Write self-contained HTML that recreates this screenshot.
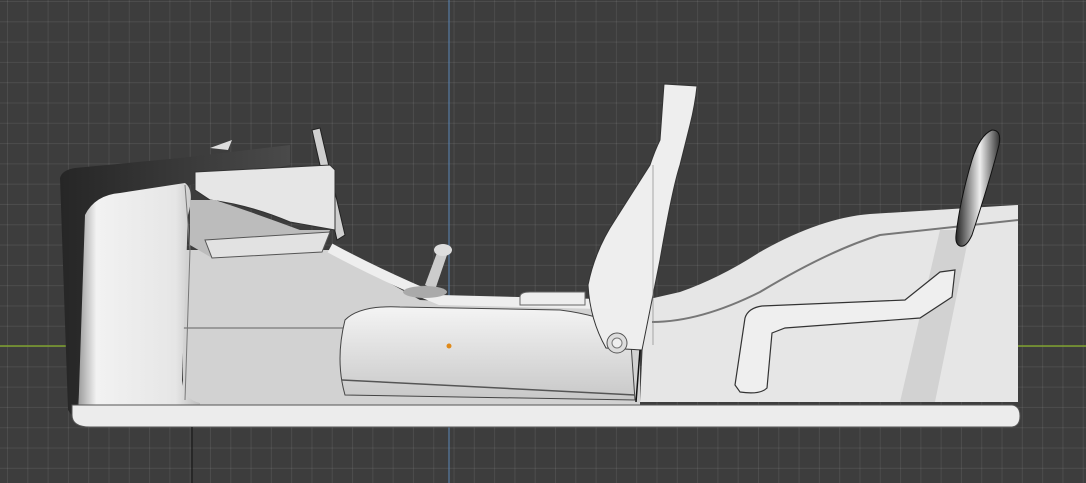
<!DOCTYPE html>
<html><head><style>
html,body{margin:0;padding:0;}
body{width:1086px;height:483px;overflow:hidden;background:#3d3d3d;position:relative;
background-image:
linear-gradient(to right, rgba(255,255,255,0.08) 1px, transparent 1px),
linear-gradient(to bottom, rgba(255,255,255,0.08) 1px, transparent 1px);
background-size:20.3px 20.3px;background-position:7px 1px;}
svg{position:absolute;left:0;top:0;}
</style></head><body>
<svg width="1086" height="483" viewBox="0 0 1086 483">
<defs>
<linearGradient id="pil" x1="0" x2="1"><stop offset="0" stop-color="#9a9a9a"/><stop offset="0.15" stop-color="#f2f2f2"/><stop offset="0.8" stop-color="#e6e6e6"/><stop offset="1" stop-color="#bdbdbd"/></linearGradient>
<linearGradient id="dark" x1="0" x2="1"><stop offset="0" stop-color="#262626"/><stop offset="1" stop-color="#4a4a4a"/></linearGradient>
<linearGradient id="seat" x1="0" y1="0" x2="0" y2="1"><stop offset="0" stop-color="#f4f4f4"/><stop offset="1" stop-color="#c8c8c8"/></linearGradient>
<linearGradient id="hr" x1="0" x2="1"><stop offset="0" stop-color="#222"/><stop offset="0.55" stop-color="#eee"/><stop offset="1" stop-color="#333"/></linearGradient>
</defs>
<line x1="449" y1="0" x2="449" y2="483" stroke="#5a87b8" stroke-width="1"/>
<line x1="0" y1="346" x2="70" y2="346" stroke="#7fa12e" stroke-width="1.5"/>
<line x1="1018" y1="346" x2="1086" y2="346" stroke="#7fa12e" stroke-width="1.5"/>
<path d="M312,130 L320,128 L345,235 L337,240 Z" fill="#cfcfcf" stroke="#222" stroke-width="1"/>
<path d="M183,250 L330,250 L420,300 L640,310 L640,405 L183,405 Z" fill="#d2d2d2"/>
<path d="M183,328 L640,328" stroke="#888" stroke-width="1.5"/>
<path d="M330,248 Q380,275 440,300 L640,305" stroke="#eee" stroke-width="10" fill="none"/>
<path d="M60,178 Q62,170 75,168 L180,158 L290,145 L290,165 L190,185 L110,200 L75,420 L68,410 Z" fill="url(#dark)"/>
<path d="M85,215 Q95,195 120,193 L185,183 Q195,190 188,215 L182,380 Q184,400 200,403 L200,410 L78,420 Z" fill="url(#pil)"/>
<path d="M185,185 L190,250 L185,400" stroke="#777" stroke-width="1" fill="none"/>
<path d="M195,172 L330,165 L335,170 L335,230 L290,222 Q250,205 210,200 L195,190 Z" fill="#e6e6e6" stroke="#333" stroke-width="1"/>
<path d="M190,200 L215,200 Q260,215 300,230 L330,230 L320,252 L212,258 L190,245 Z" fill="#bcbcbc"/>
<path d="M205,240 L330,232 L322,252 L212,258 Z" fill="#e2e2e2" stroke="#555" stroke-width="1"/>
<path d="M210,148 L232,140 L228,150 Z" fill="#ddd"/>
<path d="M425,285 L438,250 L448,252 L435,290 Z" fill="#ccc"/>
<ellipse cx="443" cy="250" rx="9" ry="6" fill="#ddd"/>
<ellipse cx="425" cy="292" rx="22" ry="6" fill="#aaa"/>
<path d="M645,300 L680,292 Q720,278 760,252 Q820,218 870,214 L1018,205 L1018,402 L640,402 Z" fill="#e6e6e6"/>
<path d="M652,322 Q700,322 760,292 Q830,250 880,235 L1018,220" stroke="#777" stroke-width="2" fill="none"/>
<path d="M940,230 L970,230 L935,402 L900,402 Z" fill="#d2d2d2"/>
<path d="M735,385 L745,318 Q748,308 762,306 L905,300 L940,272 L955,270 L952,297 L920,318 L785,328 L772,333 L767,388 Q760,395 740,392 Z" fill="#efefef" stroke="#333" stroke-width="1.2"/>
<path d="M956,235 Q960,200 972,160 Q980,135 992,130 Q1002,130 999,145 Q990,180 972,235 Q966,248 960,246 Q955,244 956,235 Z" fill="url(#hr)" stroke="#111" stroke-width="1"/>
<path d="M345,320 Q360,305 400,307 L560,310 Q600,315 630,330 L635,400 L345,395 Q335,360 345,320 Z" fill="url(#seat)" stroke="#444" stroke-width="1"/>
<path d="M342,380 L635,395" stroke="#555" stroke-width="1.5"/>
<path d="M520,297 Q520,292 530,292 L585,292 L585,305 L520,305 Z" fill="#eee" stroke="#666" stroke-width="1"/>
<circle cx="449" cy="346" r="2.5" fill="#e08a1a"/>
<path d="M664,84 L697,86 Q695,105 690,125 L680,165 Q672,190 660,260 L642,350 L606,348 Q590,320 588,285 Q595,250 615,220 L650,165 Q655,150 660,140 Z" fill="#eeeeee" stroke="#333" stroke-width="1"/>
<line x1="653" y1="165" x2="653" y2="345" stroke="#888" stroke-width="0.7"/>
<circle cx="617" cy="343" r="10" fill="#ddd" stroke="#555"/>
<circle cx="617" cy="343" r="5" fill="#eee" stroke="#777"/>
<path d="M640,350 L636,402" stroke="#111" stroke-width="1.5"/>
<path d="M72,405 L1012,405 Q1020,406 1020,416 Q1020,426 1012,427 L90,427 Q72,427 72,415 Z" fill="#ececec" stroke="#555" stroke-width="1"/>
<line x1="192" y1="427" x2="192" y2="483" stroke="#111" stroke-width="1"/>
</svg>
</body></html>
